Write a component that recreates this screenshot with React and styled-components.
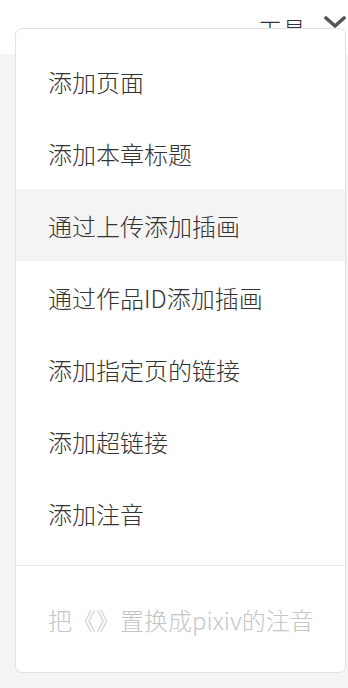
import React from "react";
import styled, { createGlobalStyle } from "styled-components";

const Global = createGlobalStyle`
  html, body { margin: 0; padding: 0; background: #f4f4f4; }
  body { font-family: "Noto Sans CJK SC", "Noto Sans", sans-serif; }
  * { box-sizing: border-box; }
`;

const Page = styled.div`
  position: relative;
  width: 348px;
  height: 688px;
  overflow: hidden;
  display: flex;
  flex-direction: column;
  background: #f4f4f4;
`;

const Header = styled.div`
  height: 54px;
  background: #ffffff;
  display: flex;
  align-items: center;
  justify-content: flex-end;
  padding: 0 2px 0 0;
  gap: 18px;
`;

const HeaderLabel = styled.span`
  font-size: 24px;
  font-weight: 300;
  line-height: 1;
  color: #333333;
  margin-top: 4px;
`;

const Chevron = styled.svg`
  width: 22px;
  height: 14px;
  margin-top: -8px;
`;

const Body = styled.div`
  flex: 1;
  background: #f4f4f4;
`;

const Menu = styled.div`
  position: absolute;
  top: 28px;
  left: 15px;
  width: 331px;
  background: #ffffff;
  border: 1px solid #e2e2e2;
  border-radius: 7px;
  overflow: hidden;
`;

const Group = styled.ul`
  list-style: none;
  margin: 0;
  padding: ${(p) => p.$pad};
  & + & {
    border-top: 1px solid #e8e8e8;
  }
`;

const Item = styled.li`
  height: 72px;
  display: flex;
  align-items: center;
  padding-left: 32px;
  font-size: 24px;
  font-weight: 300;
  color: ${(p) => (p.$disabled ? "#c6c6c6" : "#333333")};
  background: ${(p) => (p.$active ? "#f4f4f4" : "transparent")};
  white-space: nowrap;
`;

const items = [
  "添加页面",
  "添加本章标题",
  "通过上传添加插画",
  "通过作品ID添加插画",
  "添加指定页的链接",
  "添加超链接",
  "添加注音",
];

export default function App() {
  return (
    <>
      <Global />
      <Page>
        <Header>
          <HeaderLabel>工具</HeaderLabel>
          <Chevron viewBox="0 0 22 14">
            <path
              d="M2 2 L11 10 L20 2"
              fill="none"
              stroke="#555555"
              strokeWidth="3.6"
              strokeLinecap="round"
              strokeLinejoin="round"
            />
          </Chevron>
        </Header>
        <Body />
        <Menu>
          <Group $pad="16px 0 16px">
            {items.map((t, i) => (
              <Item key={t} $active={i === 2}>
                {t}
              </Item>
            ))}
          </Group>
          <Group $pad="17px 0 17px">
            <Item $disabled>把《》置换成pixiv的注音</Item>
          </Group>
        </Menu>
      </Page>
    </>
  );
}
